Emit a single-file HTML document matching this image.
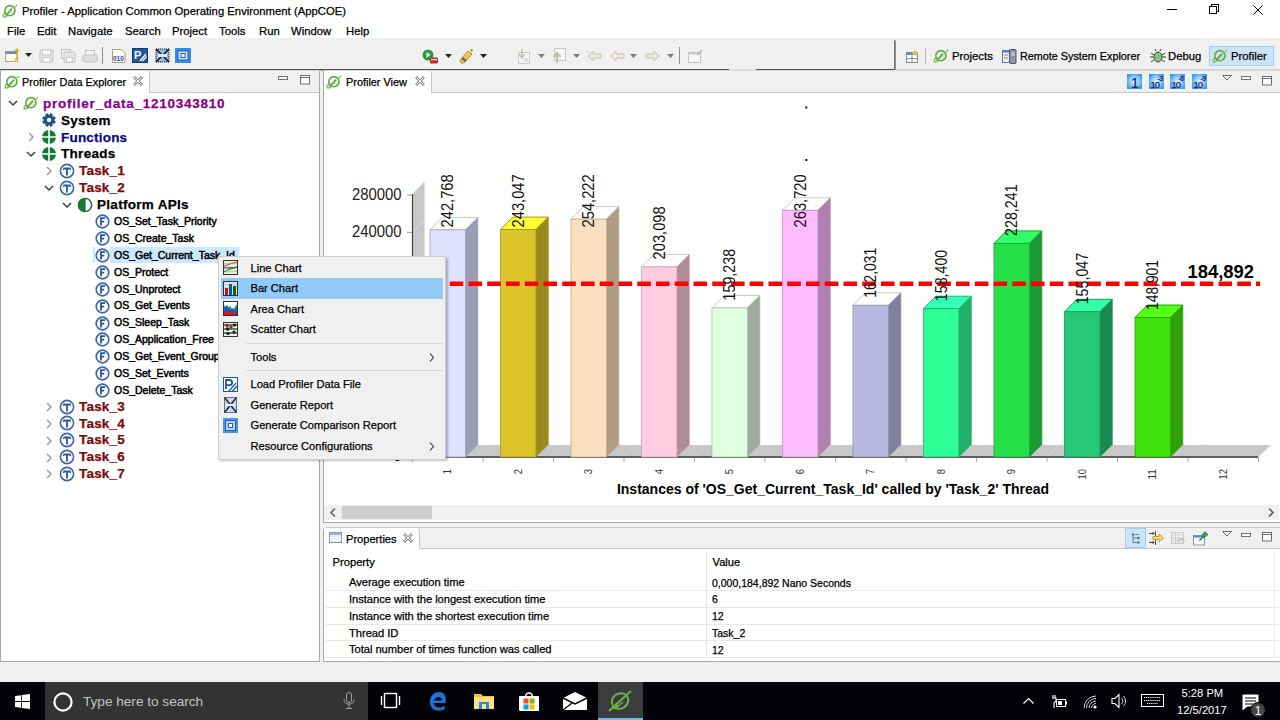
<!DOCTYPE html><html><head><meta charset="utf-8"><style>
*{margin:0;padding:0;box-sizing:border-box}
html,body{width:1280px;height:720px;overflow:hidden;background:#fff;font-family:"Liberation Sans",sans-serif;color:#000}
.a{position:absolute}
.t{position:absolute;white-space:nowrap;line-height:1;-webkit-text-stroke:0.25px currentColor}
svg{position:absolute;overflow:visible}
</style></head><body>
<div class="a" style="left:0px;top:0px;width:1280px;height:38px;background:#fff"></div>
<svg style="left:2px;top:3px" width="16" height="16" viewBox="0 0 16 16"><path d="M3.8 9.8Q0.6 10.8 1.2 13.8Q4.2 14.6 5.6 12.2" stroke="#7cc25c" stroke-width="1.3" fill="#d0ecc0"/><circle cx="7.9" cy="7.7" r="5.1" stroke="#5cae3c" stroke-width="1.6" fill="none"/><path d="M4 12.4L10 5.6" stroke="#5aaa3a" stroke-width="1.7"/><path d="M12.3 4.8L15.3 1.8" stroke="#8ccb6c" stroke-width="1.3"/><path d="M7.5 11.2l4-4M9 12l3-3" stroke="#a0d488" stroke-width="0.9"/></svg>
<div class="t" style="left:22px;top:6px;font-size:11.3px;color:#000;font-weight:normal;">Profiler - Application Common Operating Environment (AppCOE)</div>
<div class="t" style="left:7px;top:25.5px;font-size:11.3px;color:#000;font-weight:normal;">File</div>
<div class="t" style="left:37px;top:25.5px;font-size:11.3px;color:#000;font-weight:normal;">Edit</div>
<div class="t" style="left:68px;top:25.5px;font-size:11.3px;color:#000;font-weight:normal;">Navigate</div>
<div class="t" style="left:125px;top:25.5px;font-size:11.3px;color:#000;font-weight:normal;">Search</div>
<div class="t" style="left:172px;top:25.5px;font-size:11.3px;color:#000;font-weight:normal;">Project</div>
<div class="t" style="left:219px;top:25.5px;font-size:11.3px;color:#000;font-weight:normal;">Tools</div>
<div class="t" style="left:259px;top:25.5px;font-size:11.3px;color:#000;font-weight:normal;">Run</div>
<div class="t" style="left:291px;top:25.5px;font-size:11.3px;color:#000;font-weight:normal;">Window</div>
<div class="t" style="left:346px;top:25.5px;font-size:11.3px;color:#000;font-weight:normal;">Help</div>
<div class="a" style="left:1167px;top:9px;width:10px;height:1px;background:#000"></div>
<svg style="left:1209px;top:4px" width="12" height="12" viewBox="0 0 12 12"><path d="M0.5 2.5h7v7h-7z M2.5 2.5v-2h7v7h-2" fill="none" stroke="#000" stroke-width="1" shape-rendering="crispEdges"/></svg>
<svg style="left:1253px;top:4.5px" width="10" height="10" viewBox="0 0 10 10"><path d="M0.5 0.5L9.5 9.5M9.5 0.5L0.5 9.5" stroke="#000" stroke-width="1"/></svg>
<div class="a" style="left:0px;top:38px;width:1280px;height:32px;background:#f0f0f0"></div>
<div class="a" style="left:0px;top:70px;width:1280px;height:612px;background:#f0f0f0"></div>
<div class="a" style="left:0px;top:69px;width:895px;height:1px;background:#505050"></div>
<div class="a" style="left:0px;top:70px;width:895px;height:1px;background:#a8a8a8"></div>
<div class="a" style="left:729px;top:69px;width:27px;height:2px;background:#e4e4e4"></div>
<div class="a" style="left:894px;top:40px;width:2px;height:30px;background:linear-gradient(90deg,#6a6a6a,#9a9a9a);border-top-right-radius:3px"></div>
<div class="a" style="left:896px;top:69px;width:384px;height:1px;background:#d0d0d0"></div>
<svg style="left:4px;top:48px" width="16" height="15" viewBox="0 0 16 15"><rect x="1.5" y="3.5" width="12" height="10" fill="#fffbe8" stroke="#c8a850"/><rect x="1.5" y="3.5" width="12" height="2.5" fill="#5b8fd0"/><path d="M11 12c2-1 2.5-4 2-8" stroke="#e0b020" stroke-width="1.4" fill="none"/><path d="M10 3l3-3 3 3z" fill="#e8b818"/></svg>
<svg style="left:25px;top:53px" width="8" height="5" viewBox="0 0 8 5"><path d="M0 0h7l-3.5 4z" fill="#222"/></svg>
<svg style="left:39px;top:49px" width="15" height="14" viewBox="0 0 15 14"><rect x="1" y="1" width="13" height="12" rx="1" fill="#e6e6e6" stroke="#c4c4c4"/><rect x="3.5" y="1" width="8" height="5" fill="#fafafa" stroke="#c8c8c8"/><rect x="4" y="8.5" width="7" height="4.5" fill="#fff" stroke="#c8c8c8"/></svg>
<svg style="left:61px;top:49px" width="15" height="14" viewBox="0 0 15 14"><rect x="0.5" y="0.5" width="9" height="9" fill="#eee" stroke="#c4c4c4"/><rect x="3" y="3" width="11" height="10.5" rx="1" fill="#e6e6e6" stroke="#c4c4c4"/><rect x="5.5" y="8.5" width="6" height="4.5" fill="#fff" stroke="#c8c8c8"/></svg>
<svg style="left:82px;top:50px" width="16" height="13" viewBox="0 0 16 13"><rect x="3.5" y="0.5" width="9" height="5" fill="#f4f4f4" stroke="#c4c4c4"/><rect x="0.5" y="5" width="15" height="7" rx="2" fill="#dedede" stroke="#c4c4c4"/></svg>
<div class="a" style="left:102px;top:47px;width:1px;height:17px;background:#909090"></div>
<svg style="left:112px;top:49px" width="14" height="14" viewBox="0 0 14 14"><path d="M0.5 0.5h9l3.5 3.5v9.5h-12.5z" fill="#fff" stroke="#b8a068"/><text x="1" y="12" font-size="6.5" font-family="Liberation Sans" font-weight="bold" fill="#2a4a8a">010</text></svg>
<svg style="left:132px;top:48px" width="16" height="15" viewBox="0 0 16 15"><rect x="0.5" y="0.5" width="15" height="14" fill="#1e5aa0" stroke="#0e3a70"/><text x="2" y="11" font-size="11" font-family="Liberation Sans" font-weight="bold" fill="#fff">P</text><path d="M8 13l6-7M10.5 13l4-4.5" stroke="#fff" stroke-width="1.3"/></svg>
<svg style="left:155px;top:48px" width="15" height="15" viewBox="0 0 15 15"><rect x="1" y="1" width="13" height="13" fill="#9ab8e0" stroke="#101828" stroke-dasharray="1.2 0.8"/><path d="M1 1L14 14M14 1L1 14" stroke="#101828" stroke-width="1.6"/><path d="M3 7.5h9" stroke="#dfe8f6" stroke-width="3"/></svg>
<svg style="left:175px;top:48px" width="16" height="15" viewBox="0 0 16 15"><rect x="0" y="0" width="16" height="15" fill="#3a8ae8"/><rect x="3" y="3" width="10" height="9" fill="#cde2fa" stroke="#1e60c0"/><rect x="6" y="5.5" width="4" height="4" fill="#fff" stroke="#1e60c0"/></svg>
<svg style="left:422px;top:49px" width="17" height="15" viewBox="0 0 17 15"><circle cx="6" cy="6" r="5.5" fill="#2a9a3a"/><path d="M4.5 3l4 3-4 3z" fill="#fff"/><rect x="8" y="8.5" width="8" height="6" rx="1" fill="#d02828"/><rect x="9" y="10" width="6" height="1.2" fill="#fff"/></svg>
<svg style="left:445px;top:54px" width="8" height="5" viewBox="0 0 8 5"><path d="M0 0h7l-3.5 4z" fill="#222"/></svg>
<svg style="left:458px;top:48px" width="16" height="16" viewBox="0 0 16 16"><path d="M3 15l-1-3 8-9 4 3-8 9z" fill="#f0c850" stroke="#b08020" stroke-width="0.8"/><path d="M4 10l4 3" stroke="#666" stroke-width="2.4"/><path d="M12 2l2-1 1 1-1 2" fill="#b08020"/></svg>
<svg style="left:480px;top:54px" width="8" height="5" viewBox="0 0 8 5"><path d="M0 0h7l-3.5 4z" fill="#222"/></svg>
<svg style="left:516px;top:49px" width="15" height="15" viewBox="0 0 15 15"><rect x="2.5" y="3.5" width="11" height="11" fill="#f8f8f8" stroke="#c8c8c8"/><path d="M6 0v8M3 5l3 4 3-4" stroke="#c8c0a0" stroke-width="1.6" fill="none"/><path d="M8 10h4M8 12h4" stroke="#c8c8c8"/></svg>
<svg style="left:538px;top:54px" width="8" height="5" viewBox="0 0 8 5"><path d="M0 0h7l-3.5 4z" fill="#7a7a7a"/></svg>
<svg style="left:551px;top:48px" width="16" height="16" viewBox="0 0 16 16"><rect x="3.5" y="0.5" width="11" height="12" fill="#f8f8f8" stroke="#c8c8c8"/><path d="M6 15V6M2.5 9l3.5-4 3.5 4" stroke="#c8c0a0" stroke-width="2.2" fill="none"/></svg>
<svg style="left:573px;top:54px" width="8" height="5" viewBox="0 0 8 5"><path d="M0 0h7l-3.5 4z" fill="#7a7a7a"/></svg>
<svg style="left:587px;top:50px" width="16" height="12" viewBox="0 0 16 12"><path d="M1 6l5-5v3h8v4h-8v3z" fill="#f0ead8" stroke="#c8c0a8"/><path d="M0 1l2 2" stroke="#b8b8b8"/></svg>
<svg style="left:610px;top:50px" width="15" height="12" viewBox="0 0 15 12"><path d="M1 6l5-5v3h8v4h-8v3z" fill="#f0ead8" stroke="#c8c0a8"/></svg>
<svg style="left:630px;top:54px" width="8" height="5" viewBox="0 0 8 5"><path d="M0 0h7l-3.5 4z" fill="#7a7a7a"/></svg>
<svg style="left:645px;top:50px" width="15" height="12" viewBox="0 0 15 12"><path d="M14 6l-5-5v3h-8v4h8v3z" fill="#f0ead8" stroke="#c8c0a8"/></svg>
<svg style="left:667px;top:54px" width="8" height="5" viewBox="0 0 8 5"><path d="M0 0h7l-3.5 4z" fill="#7a7a7a"/></svg>
<div class="a" style="left:679px;top:47px;width:1px;height:17px;background:#909090"></div>
<svg style="left:688px;top:49px" width="15" height="14" viewBox="0 0 15 14"><rect x="0.5" y="3.5" width="12" height="10" fill="#f8f8f8" stroke="#c0c0c0"/><rect x="0.5" y="3.5" width="12" height="2" fill="#c8d0dc"/><path d="M9 6l5-5" stroke="#a8b8a8" stroke-width="1.5"/></svg>
<svg style="left:906px;top:50px" width="13" height="13" viewBox="0 0 13 13"><rect x="0.5" y="2.5" width="11" height="10" fill="#fff" stroke="#8a8a8a"/><rect x="0.5" y="2.5" width="11" height="2.5" fill="#5b8fd0"/><path d="M6 5.5v7M0.5 8.5h11" stroke="#8a8a8a"/><path d="M9 0l3 3-3 3-3-3z" fill="#f0c040"/></svg>
<div class="a" style="left:925px;top:48px;width:1px;height:16px;background:#b8b8b8"></div>
<svg style="left:933px;top:48px" width="16" height="16" viewBox="0 0 16 16"><path d="M3.8 9.8Q0.6 10.8 1.2 13.8Q4.2 14.6 5.6 12.2" stroke="#7cc25c" stroke-width="1.3" fill="#d0ecc0"/><circle cx="7.9" cy="7.7" r="5.1" stroke="#5cae3c" stroke-width="1.6" fill="none"/><path d="M4 12.4L10 5.6" stroke="#5aaa3a" stroke-width="1.7"/><path d="M12.3 4.8L15.3 1.8" stroke="#8ccb6c" stroke-width="1.3"/><path d="M7.5 11.2l4-4M9 12l3-3" stroke="#a0d488" stroke-width="0.9"/></svg>
<div class="t" style="left:952px;top:51.3px;font-size:11.3px;color:#000;font-weight:normal;">Projects</div>
<svg style="left:1002px;top:49px" width="15" height="15" viewBox="0 0 15 15"><rect x="0.5" y="1.5" width="7" height="12" fill="#e8eef8" stroke="#6a7a98"/><rect x="0.5" y="1.5" width="7" height="2" fill="#4a80d0"/><rect x="7.5" y="0.5" width="6.5" height="14" rx="1" fill="#8a94a8" stroke="#4a5468"/><path d="M2 6h4M2 9h4" stroke="#b09040"/><path d="M9 4h4M9 6h4" stroke="#dde"/></svg>
<div class="t" style="left:1020px;top:51.3px;font-size:10.8px;color:#000;font-weight:normal;">Remote System Explorer</div>
<svg style="left:1150px;top:48px" width="16" height="16" viewBox="0 0 16 16"><ellipse cx="8" cy="9" rx="4" ry="5" fill="#8ac080" stroke="#2a5a2a"/><path d="M1 5l3 2M15 5l-3 2M0 9h4M16 9h-4M1 14l3-2M15 14l-3-2M6 3L5 1M10 3l1-2" stroke="#2a4a2a" stroke-width="1"/></svg>
<div class="t" style="left:1168px;top:51.3px;font-size:11.3px;color:#000;font-weight:normal;">Debug</div>
<div class="a" style="left:1209px;top:46px;width:65px;height:20px;background:#cce4f7;border:1px solid #a6cdf0"></div>
<svg style="left:1212px;top:48px" width="16" height="16" viewBox="0 0 16 16"><path d="M3.8 9.8Q0.6 10.8 1.2 13.8Q4.2 14.6 5.6 12.2" stroke="#7cc25c" stroke-width="1.3" fill="#d0ecc0"/><circle cx="7.9" cy="7.7" r="5.1" stroke="#5cae3c" stroke-width="1.6" fill="none"/><path d="M4 12.4L10 5.6" stroke="#5aaa3a" stroke-width="1.7"/><path d="M12.3 4.8L15.3 1.8" stroke="#8ccb6c" stroke-width="1.3"/><path d="M7.5 11.2l4-4M9 12l3-3" stroke="#a0d488" stroke-width="0.9"/></svg>
<div class="t" style="left:1231px;top:51.3px;font-size:11.3px;color:#000;font-weight:normal;">Profiler</div>
<div class="a" style="left:0px;top:70px;width:320px;height:592px;background:#fff;border:1px solid #a8a8a8;border-top-color:#d8d8d8"></div>
<div class="a" style="left:1px;top:71px;width:318px;height:22px;background:#f0f0f0;border-bottom:1px solid #c8c8c8"></div>
<div class="a" style="left:1px;top:71px;width:149px;height:22px;background:#fff;border-right:1px solid #c8c8c8;border-top-right-radius:3px"></div>
<svg style="left:4px;top:74px" width="16" height="16" viewBox="0 0 16 16"><path d="M3.8 9.8Q0.6 10.8 1.2 13.8Q4.2 14.6 5.6 12.2" stroke="#7cc25c" stroke-width="1.3" fill="#d0ecc0"/><circle cx="7.9" cy="7.7" r="5.1" stroke="#5cae3c" stroke-width="1.6" fill="none"/><path d="M4 12.4L10 5.6" stroke="#5aaa3a" stroke-width="1.7"/><path d="M12.3 4.8L15.3 1.8" stroke="#8ccb6c" stroke-width="1.3"/><path d="M7.5 11.2l4-4M9 12l3-3" stroke="#a0d488" stroke-width="0.9"/></svg>
<div class="t" style="left:22px;top:77px;font-size:10.9px;color:#000;font-weight:normal;">Profiler Data Explorer</div>
<svg style="left:133px;top:76px" width="10" height="10" viewBox="0 0 10 10"><path d="M1 1L9 9M9 1L1 9" stroke="#8a8a8a" stroke-width="2.6" fill="none"/><path d="M1.6 1.6L8.4 8.4M8.4 1.6L1.6 8.4" stroke="#fff" stroke-width="1" fill="none"/></svg>
<svg style="left:278px;top:76px" width="10" height="4" viewBox="0 0 10 4"><rect x="0.5" y="0.5" width="9" height="3" fill="#fff" stroke="#707070"/></svg>
<svg style="left:300px;top:75px" width="10" height="10" viewBox="0 0 10 10"><rect x="0.5" y="0.5" width="9" height="8.5" fill="#fff" stroke="#707070"/><path d="M0.5 2.5h9" stroke="#707070"/></svg>
<div class="a" style="left:323px;top:70px;width:958px;height:453px;background:#fff;border:1px solid #a8a8a8;border-top-color:#d8d8d8"></div>
<div class="a" style="left:324px;top:71px;width:956px;height:22px;background:#f0f0f0;border-bottom:1px solid #c8c8c8"></div>
<div class="a" style="left:324px;top:71px;width:108px;height:22px;background:#fff;border-right:1px solid #c8c8c8;border-top-right-radius:3px"></div>
<svg style="left:326px;top:74px" width="16" height="16" viewBox="0 0 16 16"><path d="M3.8 9.8Q0.6 10.8 1.2 13.8Q4.2 14.6 5.6 12.2" stroke="#7cc25c" stroke-width="1.3" fill="#d0ecc0"/><circle cx="7.9" cy="7.7" r="5.1" stroke="#5cae3c" stroke-width="1.6" fill="none"/><path d="M4 12.4L10 5.6" stroke="#5aaa3a" stroke-width="1.7"/><path d="M12.3 4.8L15.3 1.8" stroke="#8ccb6c" stroke-width="1.3"/><path d="M7.5 11.2l4-4M9 12l3-3" stroke="#a0d488" stroke-width="0.9"/></svg>
<div class="t" style="left:346px;top:77px;font-size:10.9px;color:#000;font-weight:normal;">Profiler View</div>
<svg style="left:415px;top:76px" width="10" height="10" viewBox="0 0 10 10"><path d="M1 1L9 9M9 1L1 9" stroke="#8a8a8a" stroke-width="2.6" fill="none"/><path d="M1.6 1.6L8.4 8.4M8.4 1.6L1.6 8.4" stroke="#fff" stroke-width="1" fill="none"/></svg>
<div class="a" style="left:1127px;top:74px;width:15px;height:15px;background:radial-gradient(circle at 50% 50%,#e6f3ff 0%,#8cc8fa 45%,#3a9cf0 80%)"></div>
<div class="t" style="left:1131px;top:75.5px;font-size:14px;color:#1a2470;font-weight:normal;">1</div>
<div class="a" style="left:1149px;top:74px;width:15px;height:15px;background:radial-gradient(circle at 50% 50%,#e6f3ff 0%,#8cc8fa 45%,#3a9cf0 80%)"></div>
<div class="t" style="left:1150.5px;top:79.5px;font-size:9.5px;color:#1a2470;font-weight:normal;letter-spacing:-1px">10</div>
<div class="t" style="left:1157.5px;top:75px;font-size:7px;color:#1a2470;font-weight:normal;letter-spacing:-0.5px">-3</div>
<div class="a" style="left:1170px;top:74px;width:15px;height:15px;background:radial-gradient(circle at 50% 50%,#e6f3ff 0%,#8cc8fa 45%,#3a9cf0 80%)"></div>
<div class="t" style="left:1171.5px;top:79.5px;font-size:9.5px;color:#1a2470;font-weight:normal;letter-spacing:-1px">10</div>
<div class="t" style="left:1178.5px;top:75px;font-size:7px;color:#1a2470;font-weight:normal;letter-spacing:-0.5px">-6</div>
<div class="a" style="left:1192px;top:74px;width:15px;height:15px;background:radial-gradient(circle at 50% 50%,#e6f3ff 0%,#8cc8fa 45%,#3a9cf0 80%)"></div>
<div class="t" style="left:1193.5px;top:79.5px;font-size:9.5px;color:#1a2470;font-weight:normal;letter-spacing:-1px">10</div>
<div class="t" style="left:1200.5px;top:75px;font-size:7px;color:#1a2470;font-weight:normal;letter-spacing:-0.5px">-9</div>
<svg style="left:1222px;top:75px" width="10" height="6" viewBox="0 0 10 6"><path d="M0.5 0.5h9l-4.5 4.5z" fill="#fff" stroke="#6a6a6a"/></svg>
<svg style="left:1241px;top:76px" width="10" height="4" viewBox="0 0 10 4"><rect x="0.5" y="0.5" width="9" height="3" fill="#fff" stroke="#707070"/></svg>
<svg style="left:1262px;top:76px" width="10" height="10" viewBox="0 0 10 10"><rect x="0.5" y="0.5" width="9" height="8.5" fill="#fff" stroke="#707070"/><path d="M0.5 2.5h9" stroke="#707070"/></svg>
<div class="a" style="left:0px;top:662px;width:1280px;height:20px;background:#f0f0f0"></div>
<div class="a" style="left:93px;top:247px;width:146px;height:16px;background:#cce8ff"></div>
<div class="a" style="left:95px;top:247px;width:15px;height:16px;background:#fff"></div>
<svg style="left:8px;top:100px" width="10" height="6" viewBox="0 0 10 6"><path d="M1 1l4 4 4-4" fill="none" stroke="#404040" stroke-width="1.5"/></svg>
<svg style="left:23px;top:95px" width="16" height="16" viewBox="0 0 16 16"><path d="M3.8 9.8Q0.6 10.8 1.2 13.8Q4.2 14.6 5.6 12.2" stroke="#7cc25c" stroke-width="1.3" fill="#d0ecc0"/><circle cx="7.9" cy="7.7" r="5.1" stroke="#5cae3c" stroke-width="1.6" fill="none"/><path d="M4 12.4L10 5.6" stroke="#5aaa3a" stroke-width="1.7"/><path d="M12.3 4.8L15.3 1.8" stroke="#8ccb6c" stroke-width="1.3"/><path d="M7.5 11.2l4-4M9 12l3-3" stroke="#a0d488" stroke-width="0.9"/></svg>
<div class="t" style="left:43px;top:96.97px;font-size:13.5px;color:#8b008b;font-weight:bold;letter-spacing:0.75px">profiler_data_1210343810</div>
<svg style="left:41px;top:112px" width="16" height="16" viewBox="0 0 16 16"><rect x="6.4" y="1.2" width="3.2" height="3.4" rx="0.8" transform="rotate(22.5 8 8)" fill="#1e4f86"/><rect x="6.4" y="1.2" width="3.2" height="3.4" rx="0.8" transform="rotate(67.5 8 8)" fill="#1e4f86"/><rect x="6.4" y="1.2" width="3.2" height="3.4" rx="0.8" transform="rotate(112.5 8 8)" fill="#1e4f86"/><rect x="6.4" y="1.2" width="3.2" height="3.4" rx="0.8" transform="rotate(157.5 8 8)" fill="#1e4f86"/><rect x="6.4" y="1.2" width="3.2" height="3.4" rx="0.8" transform="rotate(202.5 8 8)" fill="#1e4f86"/><rect x="6.4" y="1.2" width="3.2" height="3.4" rx="0.8" transform="rotate(247.5 8 8)" fill="#1e4f86"/><rect x="6.4" y="1.2" width="3.2" height="3.4" rx="0.8" transform="rotate(292.5 8 8)" fill="#1e4f86"/><rect x="6.4" y="1.2" width="3.2" height="3.4" rx="0.8" transform="rotate(337.5 8 8)" fill="#1e4f86"/><circle cx="8" cy="8" r="5" fill="#1e4f86"/><circle cx="8" cy="8" r="2.2" fill="#fff"/></svg>
<div class="t" style="left:61px;top:113.79px;font-size:13.5px;color:#000;font-weight:bold;letter-spacing:0.3px">System</div>
<svg style="left:28px;top:132px" width="6" height="10" viewBox="0 0 6 10"><path d="M1 1l4 4-4 4" fill="none" stroke="#a0a0a0" stroke-width="1.5"/></svg>
<svg style="left:41px;top:129px" width="16" height="16" viewBox="0 0 16 16"><circle cx="8" cy="8" r="7" fill="#137a35"/><path d="M8 1v14M1 8h14" stroke="#fff" stroke-width="1.6"/></svg>
<div class="t" style="left:61px;top:130.61px;font-size:13.5px;color:#0a0a80;font-weight:bold;letter-spacing:0.2px">Functions</div>
<svg style="left:26px;top:151px" width="10" height="6" viewBox="0 0 10 6"><path d="M1 1l4 4 4-4" fill="none" stroke="#404040" stroke-width="1.5"/></svg>
<svg style="left:41px;top:146px" width="16" height="16" viewBox="0 0 16 16"><circle cx="8" cy="8" r="7" fill="#137a35"/><path d="M8 1v14M1 8h14" stroke="#fff" stroke-width="1.6"/></svg>
<div class="t" style="left:61px;top:147.43px;font-size:13.5px;color:#000;font-weight:bold;letter-spacing:0.3px">Threads</div>
<svg style="left:46px;top:166px" width="6" height="10" viewBox="0 0 6 10"><path d="M1 1l4 4-4 4" fill="none" stroke="#a0a0a0" stroke-width="1.5"/></svg>
<svg style="left:59px;top:163px" width="16" height="16" viewBox="0 0 16 16"><circle cx="8" cy="8" r="6.6" fill="#fff" stroke="#3a68a8" stroke-width="1.6"/><path d="M4.5 5.5h7M8 5.5v7" stroke="#2a5898" stroke-width="1.8"/><path d="M4.5 5.5v1.5M11.5 5.5v1.5" stroke="#2a5898" stroke-width="1.2"/></svg>
<div class="t" style="left:79px;top:164.25px;font-size:13.5px;color:#7a0a0a;font-weight:bold;letter-spacing:0.2px">Task_1</div>
<svg style="left:44px;top:185px" width="10" height="6" viewBox="0 0 10 6"><path d="M1 1l4 4 4-4" fill="none" stroke="#404040" stroke-width="1.5"/></svg>
<svg style="left:59px;top:180px" width="16" height="16" viewBox="0 0 16 16"><circle cx="8" cy="8" r="6.6" fill="#fff" stroke="#3a68a8" stroke-width="1.6"/><path d="M4.5 5.5h7M8 5.5v7" stroke="#2a5898" stroke-width="1.8"/><path d="M4.5 5.5v1.5M11.5 5.5v1.5" stroke="#2a5898" stroke-width="1.2"/></svg>
<div class="t" style="left:79px;top:181.07px;font-size:13.5px;color:#7a0a0a;font-weight:bold;letter-spacing:0.2px">Task_2</div>
<svg style="left:62px;top:202px" width="10" height="6" viewBox="0 0 10 6"><path d="M1 1l4 4 4-4" fill="none" stroke="#404040" stroke-width="1.5"/></svg>
<svg style="left:77px;top:197px" width="16" height="16" viewBox="0 0 16 16"><circle cx="8" cy="8" r="6.6" fill="#fff" stroke="#1a6a2a" stroke-width="1.4"/><path d="M8 1.4a6.6 6.6 0 0 0 0 13.2z" fill="#137a35"/><path d="M8 1.4v13.2" stroke="#137a35" stroke-width="1.2"/></svg>
<div class="t" style="left:97px;top:197.89px;font-size:13.5px;color:#000;font-weight:bold;letter-spacing:0.3px">Platform APIs</div>
<svg style="left:95px;top:214px" width="15" height="15" viewBox="0 0 15 15"><circle cx="7.5" cy="7.5" r="6.3" fill="#fff" stroke="#3a68a8" stroke-width="1.7"/><path d="M6 11.5V4.2h4.2M6 7.6h3.2" stroke="#2a5898" stroke-width="1.8" fill="none"/></svg>
<div class="t" style="left:114px;top:216.11px;font-size:10.5px;color:#000;font-weight:normal;-webkit-text-stroke:0.5px #000">OS_Set_Task_Priority</div>
<svg style="left:95px;top:231px" width="15" height="15" viewBox="0 0 15 15"><circle cx="7.5" cy="7.5" r="6.3" fill="#fff" stroke="#3a68a8" stroke-width="1.7"/><path d="M6 11.5V4.2h4.2M6 7.6h3.2" stroke="#2a5898" stroke-width="1.8" fill="none"/></svg>
<div class="t" style="left:114px;top:232.96px;font-size:10.5px;color:#000;font-weight:normal;-webkit-text-stroke:0.5px #000">OS_Create_Task</div>
<svg style="left:95px;top:248px" width="15" height="15" viewBox="0 0 15 15"><circle cx="7.5" cy="7.5" r="6.3" fill="#fff" stroke="#3a68a8" stroke-width="1.7"/><path d="M6 11.5V4.2h4.2M6 7.6h3.2" stroke="#2a5898" stroke-width="1.8" fill="none"/></svg>
<div class="t" style="left:114px;top:249.81px;font-size:10.5px;color:#000;font-weight:normal;-webkit-text-stroke:0.5px #000">OS_Get_Current_Task_Id</div>
<svg style="left:95px;top:265px" width="15" height="15" viewBox="0 0 15 15"><circle cx="7.5" cy="7.5" r="6.3" fill="#fff" stroke="#3a68a8" stroke-width="1.7"/><path d="M6 11.5V4.2h4.2M6 7.6h3.2" stroke="#2a5898" stroke-width="1.8" fill="none"/></svg>
<div class="t" style="left:114px;top:266.66px;font-size:10.5px;color:#000;font-weight:normal;-webkit-text-stroke:0.5px #000">OS_Protect</div>
<svg style="left:95px;top:282px" width="15" height="15" viewBox="0 0 15 15"><circle cx="7.5" cy="7.5" r="6.3" fill="#fff" stroke="#3a68a8" stroke-width="1.7"/><path d="M6 11.5V4.2h4.2M6 7.6h3.2" stroke="#2a5898" stroke-width="1.8" fill="none"/></svg>
<div class="t" style="left:114px;top:283.51px;font-size:10.5px;color:#000;font-weight:normal;-webkit-text-stroke:0.5px #000">OS_Unprotect</div>
<svg style="left:95px;top:299px" width="15" height="15" viewBox="0 0 15 15"><circle cx="7.5" cy="7.5" r="6.3" fill="#fff" stroke="#3a68a8" stroke-width="1.7"/><path d="M6 11.5V4.2h4.2M6 7.6h3.2" stroke="#2a5898" stroke-width="1.8" fill="none"/></svg>
<div class="t" style="left:114px;top:300.36px;font-size:10.5px;color:#000;font-weight:normal;-webkit-text-stroke:0.5px #000">OS_Get_Events</div>
<svg style="left:95px;top:316px" width="15" height="15" viewBox="0 0 15 15"><circle cx="7.5" cy="7.5" r="6.3" fill="#fff" stroke="#3a68a8" stroke-width="1.7"/><path d="M6 11.5V4.2h4.2M6 7.6h3.2" stroke="#2a5898" stroke-width="1.8" fill="none"/></svg>
<div class="t" style="left:114px;top:317.21px;font-size:10.5px;color:#000;font-weight:normal;-webkit-text-stroke:0.5px #000">OS_Sleep_Task</div>
<svg style="left:95px;top:332px" width="15" height="15" viewBox="0 0 15 15"><circle cx="7.5" cy="7.5" r="6.3" fill="#fff" stroke="#3a68a8" stroke-width="1.7"/><path d="M6 11.5V4.2h4.2M6 7.6h3.2" stroke="#2a5898" stroke-width="1.8" fill="none"/></svg>
<div class="t" style="left:114px;top:334.06px;font-size:10.5px;color:#000;font-weight:normal;-webkit-text-stroke:0.5px #000">OS_Application_Free</div>
<svg style="left:95px;top:349px" width="15" height="15" viewBox="0 0 15 15"><circle cx="7.5" cy="7.5" r="6.3" fill="#fff" stroke="#3a68a8" stroke-width="1.7"/><path d="M6 11.5V4.2h4.2M6 7.6h3.2" stroke="#2a5898" stroke-width="1.8" fill="none"/></svg>
<div class="t" style="left:114px;top:350.91px;font-size:10.5px;color:#000;font-weight:normal;-webkit-text-stroke:0.5px #000">OS_Get_Event_Group</div>
<svg style="left:95px;top:366px" width="15" height="15" viewBox="0 0 15 15"><circle cx="7.5" cy="7.5" r="6.3" fill="#fff" stroke="#3a68a8" stroke-width="1.7"/><path d="M6 11.5V4.2h4.2M6 7.6h3.2" stroke="#2a5898" stroke-width="1.8" fill="none"/></svg>
<div class="t" style="left:114px;top:367.76px;font-size:10.5px;color:#000;font-weight:normal;-webkit-text-stroke:0.5px #000">OS_Set_Events</div>
<svg style="left:95px;top:383px" width="15" height="15" viewBox="0 0 15 15"><circle cx="7.5" cy="7.5" r="6.3" fill="#fff" stroke="#3a68a8" stroke-width="1.7"/><path d="M6 11.5V4.2h4.2M6 7.6h3.2" stroke="#2a5898" stroke-width="1.8" fill="none"/></svg>
<div class="t" style="left:114px;top:384.61px;font-size:10.5px;color:#000;font-weight:normal;-webkit-text-stroke:0.5px #000">OS_Delete_Task</div>
<svg style="left:46px;top:402px" width="6" height="10" viewBox="0 0 6 10"><path d="M1 1l4 4-4 4" fill="none" stroke="#a0a0a0" stroke-width="1.5"/></svg>
<svg style="left:59px;top:399px" width="16" height="16" viewBox="0 0 16 16"><circle cx="8" cy="8" r="6.6" fill="#fff" stroke="#3a68a8" stroke-width="1.6"/><path d="M4.5 5.5h7M8 5.5v7" stroke="#2a5898" stroke-width="1.8"/><path d="M4.5 5.5v1.5M11.5 5.5v1.5" stroke="#2a5898" stroke-width="1.2"/></svg>
<div class="t" style="left:79px;top:399.73px;font-size:13.5px;color:#7a0a0a;font-weight:bold;letter-spacing:0.2px">Task_3</div>
<svg style="left:46px;top:419px" width="6" height="10" viewBox="0 0 6 10"><path d="M1 1l4 4-4 4" fill="none" stroke="#a0a0a0" stroke-width="1.5"/></svg>
<svg style="left:59px;top:415px" width="16" height="16" viewBox="0 0 16 16"><circle cx="8" cy="8" r="6.6" fill="#fff" stroke="#3a68a8" stroke-width="1.6"/><path d="M4.5 5.5h7M8 5.5v7" stroke="#2a5898" stroke-width="1.8"/><path d="M4.5 5.5v1.5M11.5 5.5v1.5" stroke="#2a5898" stroke-width="1.2"/></svg>
<div class="t" style="left:79px;top:416.55px;font-size:13.5px;color:#7a0a0a;font-weight:bold;letter-spacing:0.2px">Task_4</div>
<svg style="left:46px;top:436px" width="6" height="10" viewBox="0 0 6 10"><path d="M1 1l4 4-4 4" fill="none" stroke="#a0a0a0" stroke-width="1.5"/></svg>
<svg style="left:59px;top:432px" width="16" height="16" viewBox="0 0 16 16"><circle cx="8" cy="8" r="6.6" fill="#fff" stroke="#3a68a8" stroke-width="1.6"/><path d="M4.5 5.5h7M8 5.5v7" stroke="#2a5898" stroke-width="1.8"/><path d="M4.5 5.5v1.5M11.5 5.5v1.5" stroke="#2a5898" stroke-width="1.2"/></svg>
<div class="t" style="left:79px;top:433.37px;font-size:13.5px;color:#7a0a0a;font-weight:bold;letter-spacing:0.2px">Task_5</div>
<svg style="left:46px;top:453px" width="6" height="10" viewBox="0 0 6 10"><path d="M1 1l4 4-4 4" fill="none" stroke="#a0a0a0" stroke-width="1.5"/></svg>
<svg style="left:59px;top:449px" width="16" height="16" viewBox="0 0 16 16"><circle cx="8" cy="8" r="6.6" fill="#fff" stroke="#3a68a8" stroke-width="1.6"/><path d="M4.5 5.5h7M8 5.5v7" stroke="#2a5898" stroke-width="1.8"/><path d="M4.5 5.5v1.5M11.5 5.5v1.5" stroke="#2a5898" stroke-width="1.2"/></svg>
<div class="t" style="left:79px;top:450.19px;font-size:13.5px;color:#7a0a0a;font-weight:bold;letter-spacing:0.2px">Task_6</div>
<svg style="left:46px;top:469px" width="6" height="10" viewBox="0 0 6 10"><path d="M1 1l4 4-4 4" fill="none" stroke="#a0a0a0" stroke-width="1.5"/></svg>
<svg style="left:59px;top:466px" width="16" height="16" viewBox="0 0 16 16"><circle cx="8" cy="8" r="6.6" fill="#fff" stroke="#3a68a8" stroke-width="1.6"/><path d="M4.5 5.5h7M8 5.5v7" stroke="#2a5898" stroke-width="1.8"/><path d="M4.5 5.5v1.5M11.5 5.5v1.5" stroke="#2a5898" stroke-width="1.2"/></svg>
<div class="t" style="left:79px;top:467.01px;font-size:13.5px;color:#7a0a0a;font-weight:bold;letter-spacing:0.2px">Task_7</div>
<svg style="left:0;top:0" width="1280" height="720" viewBox="0 0 1280 720"><path d="M412.0 194.5L424.5 181.5V444L412.0 457z" fill="#c8c8c8"/><path d="M412.0 232.44000000000003l12.5 -12.5" stroke="#e0e0e0" stroke-width="1"/><path d="M412.5 194V457" stroke="#404040" stroke-width="1.2"/><path d="M412.0 457L424.5 445H1270.5L1258.0 457z" fill="#c8c8c8"/><path d="M412.5 457l12.5 -12.5" stroke="#d4d4d4" stroke-width="1"/><path d="M412.5 457v5" stroke="#b0b0b0" stroke-width="1"/><path d="M483.0 457l12.5 -12.5" stroke="#d4d4d4" stroke-width="1"/><path d="M483.0 457v5" stroke="#b0b0b0" stroke-width="1"/><path d="M553.5 457l12.5 -12.5" stroke="#d4d4d4" stroke-width="1"/><path d="M553.5 457v5" stroke="#b0b0b0" stroke-width="1"/><path d="M624.0 457l12.5 -12.5" stroke="#d4d4d4" stroke-width="1"/><path d="M624.0 457v5" stroke="#b0b0b0" stroke-width="1"/><path d="M694.5 457l12.5 -12.5" stroke="#d4d4d4" stroke-width="1"/><path d="M694.5 457v5" stroke="#b0b0b0" stroke-width="1"/><path d="M765.0 457l12.5 -12.5" stroke="#d4d4d4" stroke-width="1"/><path d="M765.0 457v5" stroke="#b0b0b0" stroke-width="1"/><path d="M835.5 457l12.5 -12.5" stroke="#d4d4d4" stroke-width="1"/><path d="M835.5 457v5" stroke="#b0b0b0" stroke-width="1"/><path d="M906.0 457l12.5 -12.5" stroke="#d4d4d4" stroke-width="1"/><path d="M906.0 457v5" stroke="#b0b0b0" stroke-width="1"/><path d="M976.5 457l12.5 -12.5" stroke="#d4d4d4" stroke-width="1"/><path d="M976.5 457v5" stroke="#b0b0b0" stroke-width="1"/><path d="M1047.0 457l12.5 -12.5" stroke="#d4d4d4" stroke-width="1"/><path d="M1047.0 457v5" stroke="#b0b0b0" stroke-width="1"/><path d="M1117.5 457l12.5 -12.5" stroke="#d4d4d4" stroke-width="1"/><path d="M1117.5 457v5" stroke="#b0b0b0" stroke-width="1"/><path d="M1188.0 457l12.5 -12.5" stroke="#d4d4d4" stroke-width="1"/><path d="M1188.0 457v5" stroke="#b0b0b0" stroke-width="1"/><path d="M1258.5 457l12.5 -12.5" stroke="#d4d4d4" stroke-width="1"/><path d="M1258.5 457v5" stroke="#b0b0b0" stroke-width="1"/><path d="M412.0 457H1258.0" stroke="#606060" stroke-width="2"/><path d="M407 456.6H412.0" stroke="#a0a0a0" stroke-width="1"/><text x="401.5" y="461.2" font-size="16.6" text-anchor="end" textLength="8.3" lengthAdjust="spacingAndGlyphs" font-family="Liberation Sans" fill="#222">0</text><path d="M407 419.2H412.0" stroke="#a0a0a0" stroke-width="1"/><text x="401.5" y="423.8" font-size="16.6" text-anchor="end" textLength="41.3" lengthAdjust="spacingAndGlyphs" font-family="Liberation Sans" fill="#222">40000</text><path d="M407 381.9H412.0" stroke="#a0a0a0" stroke-width="1"/><text x="401.5" y="386.5" font-size="16.6" text-anchor="end" textLength="41.3" lengthAdjust="spacingAndGlyphs" font-family="Liberation Sans" fill="#222">80000</text><path d="M407 344.5H412.0" stroke="#a0a0a0" stroke-width="1"/><text x="401.5" y="349.1" font-size="16.6" text-anchor="end" textLength="49.6" lengthAdjust="spacingAndGlyphs" font-family="Liberation Sans" fill="#222">120000</text><path d="M407 307.2H412.0" stroke="#a0a0a0" stroke-width="1"/><text x="401.5" y="311.8" font-size="16.6" text-anchor="end" textLength="49.6" lengthAdjust="spacingAndGlyphs" font-family="Liberation Sans" fill="#222">160000</text><path d="M407 269.8H412.0" stroke="#a0a0a0" stroke-width="1"/><text x="401.5" y="274.4" font-size="16.6" text-anchor="end" textLength="49.6" lengthAdjust="spacingAndGlyphs" font-family="Liberation Sans" fill="#222">200000</text><path d="M407 232.4H412.0" stroke="#a0a0a0" stroke-width="1"/><text x="401.5" y="237.0" font-size="16.6" text-anchor="end" textLength="49.6" lengthAdjust="spacingAndGlyphs" font-family="Liberation Sans" fill="#222">240000</text><path d="M407 195.1H412.0" stroke="#a0a0a0" stroke-width="1"/><text x="401.5" y="199.7" font-size="16.6" text-anchor="end" textLength="49.6" lengthAdjust="spacingAndGlyphs" font-family="Liberation Sans" fill="#222">280000</text><path d="M430.0 229.9L442.5 217.4H477.9L465.4 229.9z" fill="#ffffff" stroke="#c8c8c8" stroke-width="1"/><path d="M465.4 229.9L477.9 217.4V444.5L465.4 457z" fill="#9c9cb4" stroke="#a0a0c0" stroke-width="0.6"/><rect x="430.0" y="229.9" width="35.4" height="227.1" fill="#e0e0ff" stroke="#a0a0c0" stroke-width="0.8"/><path d="M500.5 229.6L513.0 217.1H548.4L535.9 229.6z" fill="#ffff33" stroke="#a89420" stroke-width="1"/><path d="M535.9 229.6L548.4 217.1V444.5L535.9 457z" fill="#9a8a1e" stroke="#a89420" stroke-width="0.6"/><rect x="500.5" y="229.6" width="35.4" height="227.4" fill="#dcc42a" stroke="#a89420" stroke-width="0.8"/><path d="M571.0 219.2L583.5 206.7H618.9L606.4 219.2z" fill="#ffffff" stroke="#c8c8c8" stroke-width="1"/><path d="M606.4 219.2L618.9 206.7V444.5L606.4 457z" fill="#ae9c86" stroke="#c0ab90" stroke-width="0.6"/><rect x="571.0" y="219.2" width="35.4" height="237.8" fill="#f8dfbf" stroke="#c0ab90" stroke-width="0.8"/><path d="M641.5 266.9L654.0 254.4H689.4L676.9 266.9z" fill="#ffffff" stroke="#c8c8c8" stroke-width="1"/><path d="M676.9 266.9L689.4 254.4V444.5L676.9 457z" fill="#b08c9a" stroke="#c8a0b0" stroke-width="0.6"/><rect x="641.5" y="266.9" width="35.4" height="190.1" fill="#ffcce0" stroke="#c8a0b0" stroke-width="0.8"/><path d="M712.0 307.9L724.5 295.4H759.9L747.4 307.9z" fill="#ffffff" stroke="#c8c8c8" stroke-width="1"/><path d="M747.4 307.9L759.9 295.4V444.5L747.4 457z" fill="#9cac9c" stroke="#a8c0a8" stroke-width="0.6"/><rect x="712.0" y="307.9" width="35.4" height="149.1" fill="#e0ffe0" stroke="#a8c0a8" stroke-width="0.8"/><path d="M782.5 210.3L795.0 197.8H830.4L817.9 210.3z" fill="#ffffff" stroke="#c8c8c8" stroke-width="1"/><path d="M817.9 210.3L830.4 197.8V444.5L817.9 457z" fill="#b080b0" stroke="#c090c0" stroke-width="0.6"/><rect x="782.5" y="210.3" width="35.4" height="246.7" fill="#ffbbff" stroke="#c090c0" stroke-width="0.8"/><path d="M853.0 305.3L865.5 292.8H900.9L888.4 305.3z" fill="#ffffff" stroke="#c8c8c8" stroke-width="1"/><path d="M888.4 305.3L900.9 292.8V444.5L888.4 457z" fill="#80809c" stroke="#9090b0" stroke-width="0.6"/><rect x="853.0" y="305.3" width="35.4" height="151.7" fill="#b8b8e0" stroke="#9090b0" stroke-width="0.8"/><path d="M923.5 308.7L936.0 296.2H971.4L958.9 308.7z" fill="#33ffbb" stroke="#20b070" stroke-width="1"/><path d="M958.9 308.7L971.4 296.2V444.5L958.9 457z" fill="#20b068" stroke="#20b070" stroke-width="0.6"/><rect x="923.5" y="308.7" width="35.4" height="148.3" fill="#2cff94" stroke="#20b070" stroke-width="0.8"/><path d="M994.0 243.4L1006.5 230.9H1041.9L1029.4 243.4z" fill="#33ff66" stroke="#1ca040" stroke-width="1"/><path d="M1029.4 243.4L1041.9 230.9V444.5L1029.4 457z" fill="#1c9a34" stroke="#1ca040" stroke-width="0.6"/><rect x="994.0" y="243.4" width="35.4" height="213.6" fill="#26e04a" stroke="#1ca040" stroke-width="0.8"/><path d="M1064.5 311.8L1077.0 299.3H1112.4L1099.9 311.8z" fill="#33ffaa" stroke="#1c9a5a" stroke-width="1"/><path d="M1099.9 311.8L1112.4 299.3V444.5L1099.9 457z" fill="#1a8a52" stroke="#1c9a5a" stroke-width="0.6"/><rect x="1064.5" y="311.8" width="35.4" height="145.2" fill="#26c878" stroke="#1c9a5a" stroke-width="0.8"/><path d="M1135.0 317.5L1147.5 305.0H1182.9L1170.4 317.5z" fill="#55ff11" stroke="#30a010" stroke-width="1"/><path d="M1170.4 317.5L1182.9 305.0V444.5L1170.4 457z" fill="#2fa008" stroke="#30a010" stroke-width="0.6"/><rect x="1135.0" y="317.5" width="35.4" height="139.5" fill="#40e00a" stroke="#30a010" stroke-width="0.8"/><path d="M406 283.7H1260" stroke="#ff0000" stroke-width="4.6" stroke-dasharray="13.6 5.15" stroke-dashoffset="-6.25"/><text transform="translate(453.2 227.4) rotate(-90)" font-size="15.6" textLength="53.0" lengthAdjust="spacingAndGlyphs" font-family="Liberation Sans" fill="#111">242,768</text><text transform="translate(523.8 227.4) rotate(-90)" font-size="15.6" textLength="53.0" lengthAdjust="spacingAndGlyphs" font-family="Liberation Sans" fill="#111">243,047</text><text transform="translate(594.2 227.4) rotate(-90)" font-size="15.6" textLength="53.0" lengthAdjust="spacingAndGlyphs" font-family="Liberation Sans" fill="#111">254,222</text><text transform="translate(664.8 259.4) rotate(-90)" font-size="15.6" textLength="53.0" lengthAdjust="spacingAndGlyphs" font-family="Liberation Sans" fill="#111">203,098</text><text transform="translate(735.2 300.4) rotate(-90)" font-size="15.6" textLength="51.5" lengthAdjust="spacingAndGlyphs" font-family="Liberation Sans" fill="#111">159,238</text><text transform="translate(805.8 227.4) rotate(-90)" font-size="15.6" textLength="53.0" lengthAdjust="spacingAndGlyphs" font-family="Liberation Sans" fill="#111">263,720</text><text transform="translate(876.2 297.8) rotate(-90)" font-size="15.6" textLength="50.0" lengthAdjust="spacingAndGlyphs" font-family="Liberation Sans" fill="#111">162,031</text><text transform="translate(946.8 301.2) rotate(-90)" font-size="15.6" textLength="51.5" lengthAdjust="spacingAndGlyphs" font-family="Liberation Sans" fill="#111">158,400</text><text transform="translate(1017.2 235.9) rotate(-90)" font-size="15.6" textLength="51.5" lengthAdjust="spacingAndGlyphs" font-family="Liberation Sans" fill="#111">228,241</text><text transform="translate(1087.8 304.3) rotate(-90)" font-size="15.6" textLength="51.5" lengthAdjust="spacingAndGlyphs" font-family="Liberation Sans" fill="#111">155,047</text><text transform="translate(1158.2 310.0) rotate(-90)" font-size="15.6" textLength="50.0" lengthAdjust="spacingAndGlyphs" font-family="Liberation Sans" fill="#111">148,901</text><text transform="translate(451.1 469) rotate(-90)" text-anchor="end" font-size="10.9" textLength="5.25" lengthAdjust="spacingAndGlyphs" font-family="Liberation Sans" fill="#333">1</text><text transform="translate(521.6 469) rotate(-90)" text-anchor="end" font-size="10.9" textLength="5.25" lengthAdjust="spacingAndGlyphs" font-family="Liberation Sans" fill="#333">2</text><text transform="translate(592.1 469) rotate(-90)" text-anchor="end" font-size="10.9" textLength="5.25" lengthAdjust="spacingAndGlyphs" font-family="Liberation Sans" fill="#333">3</text><text transform="translate(662.6 469) rotate(-90)" text-anchor="end" font-size="10.9" textLength="5.25" lengthAdjust="spacingAndGlyphs" font-family="Liberation Sans" fill="#333">4</text><text transform="translate(733.1 469) rotate(-90)" text-anchor="end" font-size="10.9" textLength="5.25" lengthAdjust="spacingAndGlyphs" font-family="Liberation Sans" fill="#333">5</text><text transform="translate(803.6 469) rotate(-90)" text-anchor="end" font-size="10.9" textLength="5.25" lengthAdjust="spacingAndGlyphs" font-family="Liberation Sans" fill="#333">6</text><text transform="translate(874.1 469) rotate(-90)" text-anchor="end" font-size="10.9" textLength="5.25" lengthAdjust="spacingAndGlyphs" font-family="Liberation Sans" fill="#333">7</text><text transform="translate(944.6 469) rotate(-90)" text-anchor="end" font-size="10.9" textLength="5.25" lengthAdjust="spacingAndGlyphs" font-family="Liberation Sans" fill="#333">8</text><text transform="translate(1015.1 469) rotate(-90)" text-anchor="end" font-size="10.9" textLength="5.25" lengthAdjust="spacingAndGlyphs" font-family="Liberation Sans" fill="#333">9</text><text transform="translate(1085.7 469) rotate(-90)" text-anchor="end" font-size="10.9" textLength="10.5" lengthAdjust="spacingAndGlyphs" font-family="Liberation Sans" fill="#333">10</text><text transform="translate(1156.2 469) rotate(-90)" text-anchor="end" font-size="10.9" textLength="10.5" lengthAdjust="spacingAndGlyphs" font-family="Liberation Sans" fill="#333">11</text><text transform="translate(1226.7 469) rotate(-90)" text-anchor="end" font-size="10.9" textLength="10.5" lengthAdjust="spacingAndGlyphs" font-family="Liberation Sans" fill="#333">12</text><text x="1254" y="277.6" font-size="18.4" font-weight="bold" text-anchor="end" font-family="Liberation Sans" fill="#000">184,892</text><rect x="805.3" y="106.5" width="2" height="2" fill="#111"/><rect x="805.3" y="159" width="2" height="2" fill="#111"/><text x="833" y="494" font-size="14" font-weight="bold" text-anchor="middle" font-family="Liberation Sans" fill="#000">Instances of 'OS_Get_Current_Task_Id' called by 'Task_2' Thread</text></svg>
<div class="a" style="left:324px;top:505px;width:955px;height:15px;background:#f0f0f0"></div>
<div class="a" style="left:342px;top:506px;width:90px;height:13px;background:#cdcdcd"></div>
<svg style="left:329px;top:508px" width="8" height="9" viewBox="0 0 8 9"><path d="M6 0.5L2 4.5l4 4" fill="none" stroke="#606060" stroke-width="1.6"/></svg>
<svg style="left:1267px;top:508px" width="8" height="9" viewBox="0 0 8 9"><path d="M2 0.5l4 4-4 4" fill="none" stroke="#606060" stroke-width="1.6"/></svg>
<div class="a" style="left:323px;top:527px;width:958px;height:135px;background:#fff;border:1px solid #a8a8a8;border-top-color:#c8c8c8;border-top-left-radius:4px"></div>
<div class="a" style="left:324px;top:528px;width:956px;height:21px;background:#f0f0f0;border-bottom:1px solid #c8c8c8"></div>
<div class="a" style="left:324px;top:528px;width:96px;height:21px;background:#fff;border-right:1px solid #c8c8c8;border-top-left-radius:3px;border-top-right-radius:3px"></div>
<svg style="left:329px;top:532px" width="13" height="11" viewBox="0 0 13 11"><rect x="0.5" y="0.5" width="12" height="10" fill="#e8eef6" stroke="#7890b0"/><rect x="0.5" y="0.5" width="12" height="2.5" fill="#9ab0cc"/><path d="M0.5 5.5h12M0.5 8h12M4.5 3v7.5" stroke="#fff" stroke-width="0.9"/></svg>
<div class="t" style="left:346px;top:533.7px;font-size:11.1px;color:#000;font-weight:normal;">Properties</div>
<svg style="left:403px;top:533px" width="10" height="10" viewBox="0 0 10 10"><path d="M1 1L9 9M9 1L1 9" stroke="#8a8a8a" stroke-width="2.6" fill="none"/><path d="M1.6 1.6L8.4 8.4M8.4 1.6L1.6 8.4" stroke="#fff" stroke-width="1" fill="none"/></svg>
<div class="a" style="left:1125px;top:528px;width:21px;height:20px;background:#cce4f7;border:1px solid #a6cdf0"></div>
<svg style="left:1131px;top:533px" width="10" height="11" viewBox="0 0 10 11"><path d="M2 1.5v8.5M2 5h5M2 9.5h5M4 1.5h4" stroke="#5a7090" stroke-width="0.9" fill="none"/><circle cx="2" cy="1.5" r="1.3" fill="#5a7898"/><circle cx="7.5" cy="5" r="1.3" fill="#5a7898"/><circle cx="7.5" cy="9.5" r="1.3" fill="#5a7898"/></svg>
<svg style="left:1149px;top:531px" width="15" height="14" viewBox="0 0 15 14"><path d="M0 2.5h5M3.5 1l1.5 1.5-1.5 1.5M6.5 0v5M0 11.5h5M3.5 10l1.5 1.5-1.5 1.5M6.5 9v5" stroke="#404858" stroke-width="1" fill="none"/><path d="M4 5.5h6v-2.5l4.5 4-4.5 4v-2.5h-6z" fill="#f8d878" stroke="#c89020" stroke-width="0.9"/></svg>
<svg style="left:1171px;top:532px" width="14" height="13" viewBox="0 0 14 13"><rect x="0.5" y="0.5" width="12" height="11" fill="#f0f0f0" stroke="#c8c8c8"/><path d="M0.5 3h12M0.5 6h12M0.5 9h12M4.5 0.5v11" stroke="#d0d0d0"/><path d="M7 10a3 3 0 0 1 6 0" stroke="#c0c0c0" stroke-width="1.5" fill="none"/></svg>
<svg style="left:1193px;top:531px" width="15" height="15" viewBox="0 0 15 15"><rect x="0.5" y="4.5" width="11" height="9.5" fill="#f4f8fc" stroke="#8a98a8"/><rect x="0.5" y="4.5" width="11" height="2" fill="#4a90d8"/><path d="M6.5 9.5l4-4" stroke="#2a6a2a" stroke-width="1.2"/><path d="M9 4l3-3.5 3 3-3.5 3z" fill="#3aa040" stroke="#1e7028" stroke-width="0.7"/></svg>
<svg style="left:1222px;top:531px" width="10" height="6" viewBox="0 0 10 6"><path d="M0.5 0.5h9l-4.5 4.5z" fill="#fff" stroke="#6a6a6a"/></svg>
<svg style="left:1241px;top:533px" width="10" height="4" viewBox="0 0 10 4"><rect x="0.5" y="0.5" width="9" height="3" fill="#fff" stroke="#707070"/></svg>
<svg style="left:1262px;top:532px" width="10" height="10" viewBox="0 0 10 10"><rect x="0.5" y="0.5" width="9" height="8.5" fill="#fff" stroke="#707070"/><path d="M0.5 2.5h9" stroke="#707070"/></svg>
<div class="t" style="left:332.5px;top:557.12px;font-size:11.2px;color:#000;font-weight:normal;">Property</div>
<div class="t" style="left:712.5px;top:557.12px;font-size:11.2px;color:#000;font-weight:normal;">Value</div>
<div class="a" style="left:706px;top:552px;width:1px;height:107px;background:#e4e4e4"></div>
<div class="t" style="left:349px;top:577.02px;font-size:11.2px;color:#000;font-weight:normal;letter-spacing:-0.05px">Average execution time</div>
<div class="t" style="left:712px;top:577.61px;font-size:10.5px;color:#000;font-weight:normal;">0,000,184,892 Nano Seconds</div>
<div class="a" style="left:326px;top:590px;width:953px;height:1px;background:#e8e8e8"></div>
<div class="t" style="left:349px;top:593.87px;font-size:11.2px;color:#000;font-weight:normal;letter-spacing:-0.05px">Instance with the longest execution time</div>
<div class="t" style="left:712px;top:594.46px;font-size:10.5px;color:#000;font-weight:normal;">6</div>
<div class="a" style="left:326px;top:607px;width:953px;height:1px;background:#e8e8e8"></div>
<div class="t" style="left:349px;top:610.72px;font-size:11.2px;color:#000;font-weight:normal;letter-spacing:-0.05px">Instance with the shortest execution time</div>
<div class="t" style="left:712px;top:611.31px;font-size:10.5px;color:#000;font-weight:normal;">12</div>
<div class="a" style="left:326px;top:624px;width:953px;height:1px;background:#e8e8e8"></div>
<div class="t" style="left:349px;top:627.57px;font-size:11.2px;color:#000;font-weight:normal;letter-spacing:-0.05px">Thread ID</div>
<div class="t" style="left:712px;top:628.16px;font-size:10.5px;color:#000;font-weight:normal;">Task_2</div>
<div class="a" style="left:326px;top:640px;width:953px;height:1px;background:#e8e8e8"></div>
<div class="t" style="left:349px;top:644.42px;font-size:11.2px;color:#000;font-weight:normal;letter-spacing:-0.05px">Total number of times function was called</div>
<div class="t" style="left:712px;top:645.01px;font-size:10.5px;color:#000;font-weight:normal;">12</div>
<div class="a" style="left:326px;top:657px;width:953px;height:1px;background:#e8e8e8"></div>
<div class="a" style="left:1274px;top:551px;width:1px;height:108px;background:#ececec"></div>
<div class="a" style="left:220px;top:258px;width:228px;height:203px;background:rgba(0,0,0,0.25);filter:blur(1.2px)"></div>
<div class="a" style="left:218px;top:256px;width:228px;height:204px;background:#f0f0f0;border:1px solid #cccccc"></div>
<div class="a" style="left:221px;top:278px;width:222px;height:21px;background:#91c9f7"></div>
<div class="a" style="left:246px;top:343px;width:197px;height:1px;background:#d7d7d7"></div>
<div class="a" style="left:246px;top:370px;width:197px;height:1px;background:#d7d7d7"></div>
<div class="t" style="left:250.5px;top:262.6px;font-size:11.1px;color:#000;font-weight:normal;">Line Chart</div>
<div class="t" style="left:250.5px;top:283.1px;font-size:11.1px;color:#000;font-weight:normal;">Bar Chart</div>
<div class="t" style="left:250.5px;top:303.6px;font-size:11.1px;color:#000;font-weight:normal;">Area Chart</div>
<div class="t" style="left:250.5px;top:324.1px;font-size:11.1px;color:#000;font-weight:normal;">Scatter Chart</div>
<div class="t" style="left:250.5px;top:351.6px;font-size:11.1px;color:#000;font-weight:normal;">Tools</div>
<div class="t" style="left:250.5px;top:378.6px;font-size:11.1px;color:#000;font-weight:normal;">Load Profiler Data File</div>
<div class="t" style="left:250.5px;top:399.6px;font-size:11.1px;color:#000;font-weight:normal;">Generate Report</div>
<div class="t" style="left:250.5px;top:420.1px;font-size:11.1px;color:#000;font-weight:normal;">Generate Comparison Report</div>
<div class="t" style="left:250.5px;top:440.6px;font-size:11.1px;color:#000;font-weight:normal;">Resource Configurations</div>
<svg style="left:429px;top:353px" width="6" height="9" viewBox="0 0 6 9"><path d="M1 0.5l3.5 4-3.5 4" fill="none" stroke="#333" stroke-width="1.1"/></svg>
<svg style="left:429px;top:442px" width="6" height="9" viewBox="0 0 6 9"><path d="M1 0.5l3.5 4-3.5 4" fill="none" stroke="#333" stroke-width="1.1"/></svg>
<svg style="left:223px;top:260px" width="15" height="15" viewBox="0 0 15 15"><rect x="0.5" y="0.5" width="14" height="14" fill="#f0f4e0" stroke="#303030"/><path d="M1 3.5h13M1 7.5h13M1 11.5h13" stroke="#b8d890" stroke-width="1.6"/><path d="M1 6c4-1 8-3 13-4" stroke="#d04020" stroke-width="1" fill="none"/><path d="M1 8c4-1 8 1 13-1" stroke="#2040d0" stroke-width="1.2" fill="none"/><path d="M1 12c4-3 8-3 13-5" stroke="#207020" stroke-width="1" fill="none"/></svg>
<svg style="left:223px;top:281px" width="15" height="15" viewBox="0 0 15 15"><rect x="0.5" y="0.5" width="14" height="14" fill="#d8e8f8" stroke="#303030"/><path d="M1 3.5h13M1 7.5h13" stroke="#b8e0a0" stroke-width="1.4"/><rect x="2" y="7" width="3" height="7" fill="#c01818"/><rect x="6" y="3" width="3" height="11" fill="#1050a8"/><rect x="10" y="5" width="3" height="9" fill="#106020"/></svg>
<svg style="left:223px;top:301px" width="15" height="15" viewBox="0 0 15 15"><rect x="0.5" y="0.5" width="14" height="14" fill="#fff" stroke="#303030"/><path d="M1 14V4l3 4 3-3 3 4 4-6v11z" fill="#18b030"/><path d="M1 14V7l3-3 3 5 3-2 2 3 2-5v9z" fill="#1850e0"/><path d="M1 14v-3l5-1 8 3v1z" fill="#d01818"/></svg>
<svg style="left:223px;top:322px" width="15" height="15" viewBox="0 0 15 15"><rect x="0.5" y="0.5" width="14" height="14" fill="#e8f4e0" stroke="#303030"/><path d="M1 3h13M1 7h13M1 11h13" stroke="#2a6a2a" stroke-width="1.3"/><circle cx="4" cy="3.5" r="1.7" fill="#b01818"/><circle cx="4.5" cy="7" r="1.7" fill="#101838"/><circle cx="8" cy="5" r="1.7" fill="#b01818"/><circle cx="11.5" cy="3" r="1.6" fill="#101838"/><circle cx="11" cy="10" r="1.6" fill="#101838"/><circle cx="5" cy="11.5" r="1.6" fill="#101838"/></svg>
<svg style="left:223px;top:377px" width="15" height="15" viewBox="0 0 15 15"><rect x="0.5" y="0.5" width="14" height="14" fill="#fff" stroke="#1e5aa0"/><path d="M3 12V3h3.5a2.6 2.6 0 0 1 0 5.2H3" fill="none" stroke="#1e5aa0" stroke-width="1.8"/><path d="M6 14l7-8M9.5 14l4.5-5" stroke="#1e5aa0" stroke-width="1.3"/></svg>
<svg style="left:223px;top:397px" width="15" height="16" viewBox="0 0 15 16"><rect x="1.5" y="0.5" width="12" height="15" fill="#c8d8f0" stroke="#202838" stroke-dasharray="1.2 0.8"/><path d="M1.5 0.5L13.5 15.5M13.5 0.5L1.5 15.5" stroke="#202838" stroke-width="1.5"/><path d="M3 8h9" stroke="#eef" stroke-width="2"/></svg>
<svg style="left:223px;top:418px" width="15" height="15" viewBox="0 0 15 15"><rect x="0" y="0" width="15" height="15" fill="#4a94ec"/><rect x="2.5" y="2.5" width="10" height="10" fill="#b8d4f4" stroke="#1e60c0"/><rect x="5.5" y="5.5" width="4" height="4" fill="#fff" stroke="#1e60c0"/></svg>
<div class="a" style="left:0px;top:682px;width:1280px;height:38px;background:#020308"></div>
<div class="a" style="left:45px;top:682px;width:323px;height:38px;background:#333333"></div>
<svg style="left:15px;top:694px" width="15" height="15" viewBox="0 0 15 15"><path d="M0 2L6 1.2v5.9H0zM6.8 1.1L15 0v7.1H6.8zM0 7.9h6v5.9L0 13zM6.8 7.9H15V15l-8.2-1.1z" fill="#fff"/></svg>
<svg style="left:52px;top:691px" width="22" height="22" viewBox="0 0 22 22"><circle cx="11" cy="11" r="8.6" fill="none" stroke="#fff" stroke-width="2.2"/></svg>
<div class="t" style="left:83px;top:694.99px;font-size:13.6px;color:#c4c4c4;font-weight:normal;-webkit-text-stroke:0">Type here to search</div>
<svg style="left:343px;top:692px" width="12" height="18" viewBox="0 0 12 18"><rect x="3.5" y="0.5" width="5" height="10" rx="2.5" fill="none" stroke="#a0a0a0"/><path d="M1 7c0 4 2 5 5 5s5-1 5-5M6 12v4M3 16.5h6" fill="none" stroke="#a0a0a0"/></svg>
<svg style="left:380px;top:691px" width="21" height="20" viewBox="0 0 21 20"><rect x="4.5" y="2.5" width="12" height="14" fill="none" stroke="#fff" stroke-width="1.4"/><path d="M1.5 5v9M19.5 5v9" stroke="#fff" stroke-width="1.4"/></svg>
<svg style="left:428px;top:691px" width="20" height="20" viewBox="0 0 20 20"><path d="M17.5 12H5.6c.3 2.8 2.4 4.6 5.3 4.6 2 0 4-.7 5.8-1.9v3.3c-1.8 1.1-4 1.6-6.3 1.6-4.6 0-8.4-3.1-8.4-8.9C2 5.3 6 1 11 1c4.4 0 6.8 3.2 6.8 7.4zM14.2 9.6c0-2.3-1.3-3.7-3.3-3.7s-4.2 1.4-4.9 3.7z" fill="#1976d8"/></svg>
<svg style="left:473px;top:691px" width="22" height="20" viewBox="0 0 22 20"><path d="M1 3h7l2 2h11v13H1z" fill="#f0c040"/><path d="M1 6h20v12H1z" fill="#ffe08a"/><rect x="6" y="11" width="10" height="7" fill="#2a8ad8"/><rect x="9" y="13" width="4" height="5" fill="#ffe08a"/></svg>
<svg style="left:518px;top:690px" width="22" height="22" viewBox="0 0 22 22"><path d="M7.5 6.5a3.5 3.5 0 0 1 7 0" fill="none" stroke="#fff" stroke-width="1.4"/><rect x="1" y="6" width="20" height="15" rx="1" fill="#fff"/><rect x="5.5" y="8.5" width="5" height="5" fill="#f25022"/><rect x="11.5" y="8.5" width="5" height="5" fill="#7fba00"/><rect x="5.5" y="14.5" width="5" height="5" fill="#00a4ef"/><rect x="11.5" y="14.5" width="5" height="5" fill="#ffb900"/></svg>
<svg style="left:563px;top:692px" width="24" height="18" viewBox="0 0 24 18"><path d="M0 6L12 0l12 6v12H0z" fill="#fff"/><path d="M0 6l12 6 12-6" fill="none" stroke="#000" stroke-width="1.4"/><path d="M0 18l9-7" stroke="#000" stroke-width="1.2"/></svg>
<div class="a" style="left:598px;top:682px;width:45px;height:38px;background:#3c3c3c"></div>
<div class="a" style="left:598px;top:718px;width:45px;height:2px;background:#76b9ed"></div>
<svg style="left:607px;top:689px" width="26" height="24" viewBox="0 0 26 24"><g fill="none" stroke="#6ab04c" stroke-width="2"><ellipse cx="13" cy="12" rx="8.5" ry="7.5" transform="rotate(-35 13 12)"/><path d="M2 22L24 2"/><path d="M5 20l6-4M8 20l8-7" stroke-width="1.2"/></g></svg>
<svg style="left:1023px;top:697px" width="11" height="7" viewBox="0 0 11 7"><path d="M0.5 6.5l5-5 5 5" fill="none" stroke="#fff" stroke-width="1.2"/></svg>
<svg style="left:1051px;top:695px" width="16" height="14" viewBox="0 0 16 14"><rect x="5.5" y="4.5" width="9" height="7" fill="none" stroke="#fff"/><rect x="14.5" y="6.5" width="1.5" height="3" fill="#fff"/><rect x="7" y="6" width="4" height="4" fill="#fff"/><path d="M2 0v3M4 0v3M1 3h4v3l-2 2v5" fill="none" stroke="#fff" stroke-width="1.1"/></svg>
<svg style="left:1083px;top:695px" width="14" height="14" viewBox="0 0 14 14"><path d="M1 13a12 12 0 0 1 12-12M3.5 13a9.5 9.5 0 0 1 9.5-9.5M6 13a7 7 0 0 1 7-7M8.5 13a4.5 4.5 0 0 1 4.5-4.5" fill="none" stroke="#ccc" stroke-width="1"/><circle cx="12" cy="12" r="1.6" fill="#fff"/></svg>
<svg style="left:1111px;top:693px" width="16" height="16" viewBox="0 0 16 16"><path d="M1 5.5h3l4-4v13l-4-4H1z" fill="none" stroke="#fff" stroke-width="1.1"/><path d="M10.5 5a4 4 0 0 1 0 6M12.5 3a7 7 0 0 1 0 10" fill="none" stroke="#ccc" stroke-width="1"/></svg>
<svg style="left:1141px;top:694px" width="23" height="14" viewBox="0 0 23 14"><rect x="0.5" y="0.5" width="22" height="12" fill="none" stroke="#fff"/><path d="M3 3.5h17M3 6.5h17M6 9.5h11" stroke="#fff" stroke-dasharray="1.2 0.9"/></svg>
<div class="t" style="left:1181.5px;top:688.02px;font-size:11.2px;color:#fff;font-weight:normal;-webkit-text-stroke:0">5:28 PM</div>
<div class="t" style="left:1177px;top:705.02px;font-size:11.2px;color:#fff;font-weight:normal;-webkit-text-stroke:0">12/5/2017</div>
<svg style="left:1242px;top:694px" width="25" height="25" viewBox="0 0 25 25"><path d="M0.5 0.5h16v12h-11l-5 4z" fill="#fff"/><path d="M3 4h11M3 7h11M3 10h8" stroke="#000" stroke-width="1"/><circle cx="16" cy="16" r="7.5" fill="#444" stroke="#000"/><text x="16" y="20.5" font-size="12" text-anchor="middle" font-family="Liberation Sans" fill="#fff">1</text></svg>
</body></html>
